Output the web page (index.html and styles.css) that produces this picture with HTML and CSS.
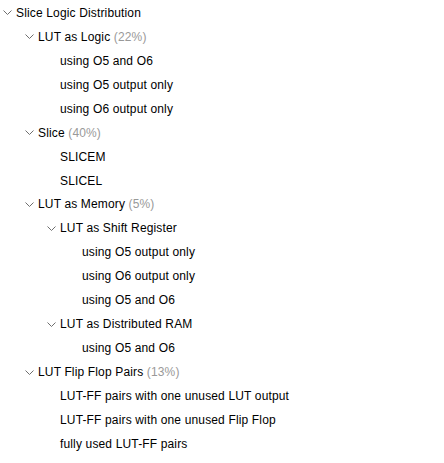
FILE: index.html
```html
<!DOCTYPE html>
<html>
<head>
<meta charset="utf-8">
<link rel="stylesheet" href="styles.css">
</head>
<body>
<ul class="tree">
  <li class="row l0"><span class="chev"><svg viewBox="0 0 9 5" width="9" height="5"><path d="M0.5 0.5 L4.5 4.5 L8.5 0.5" /></svg></span><span class="label">Slice Logic Distribution</span></li>
  <li class="row l1"><span class="chev"><svg viewBox="0 0 9 5" width="9" height="5"><path d="M0.5 0.5 L4.5 4.5 L8.5 0.5" /></svg></span><span class="label">LUT as Logic <span class="pct">(22%)</span></span></li>
  <li class="row l2"><span class="chev"></span><span class="label">using O5 and O6</span></li>
  <li class="row l2"><span class="chev"></span><span class="label">using O5 output only</span></li>
  <li class="row l2"><span class="chev"></span><span class="label">using O6 output only</span></li>
  <li class="row l1"><span class="chev"><svg viewBox="0 0 9 5" width="9" height="5"><path d="M0.5 0.5 L4.5 4.5 L8.5 0.5" /></svg></span><span class="label">Slice <span class="pct">(40%)</span></span></li>
  <li class="row l2"><span class="chev"></span><span class="label">SLICEM</span></li>
  <li class="row l2"><span class="chev"></span><span class="label">SLICEL</span></li>
  <li class="row l1"><span class="chev"><svg viewBox="0 0 9 5" width="9" height="5"><path d="M0.5 0.5 L4.5 4.5 L8.5 0.5" /></svg></span><span class="label">LUT as Memory <span class="pct">(5%)</span></span></li>
  <li class="row l2"><span class="chev"><svg viewBox="0 0 9 5" width="9" height="5"><path d="M0.5 0.5 L4.5 4.5 L8.5 0.5" /></svg></span><span class="label">LUT as Shift Register</span></li>
  <li class="row l3"><span class="chev"></span><span class="label">using O5 output only</span></li>
  <li class="row l3"><span class="chev"></span><span class="label">using O6 output only</span></li>
  <li class="row l3"><span class="chev"></span><span class="label">using O5 and O6</span></li>
  <li class="row l2"><span class="chev"><svg viewBox="0 0 9 5" width="9" height="5"><path d="M0.5 0.5 L4.5 4.5 L8.5 0.5" /></svg></span><span class="label">LUT as Distributed RAM</span></li>
  <li class="row l3"><span class="chev"></span><span class="label">using O5 and O6</span></li>
  <li class="row l1"><span class="chev"><svg viewBox="0 0 9 5" width="9" height="5"><path d="M0.5 0.5 L4.5 4.5 L8.5 0.5" /></svg></span><span class="label">LUT Flip Flop Pairs <span class="pct">(13%)</span></span></li>
  <li class="row l2"><span class="chev"></span><span class="label">LUT-FF pairs with one unused LUT output</span></li>
  <li class="row l2"><span class="chev"></span><span class="label">LUT-FF pairs with one unused Flip Flop</span></li>
  <li class="row l2"><span class="chev"></span><span class="label">fully used LUT-FF pairs</span></li>
</ul>
</body>
</html>
```
FILE: styles.css
```css
html, body {
  margin: 0;
  padding: 0;
  background: #ffffff;
}
body {
  font-family: "Liberation Sans", Arial, sans-serif;
  font-size: 12px;
  letter-spacing: 0.15px;
  color: #000000;
}
.tree {
  list-style: none;
  margin: 0;
  padding: 1px 0 0 0;
}
.row {
  display: flex;
  align-items: center;
  height: 23.94px;
  white-space: nowrap;
}
.l0 { padding-left: 3px; }
.l1 { padding-left: 25px; }
.l2 { padding-left: 47px; }
.l3 { padding-left: 69px; }
.chev {
  display: flex;
  align-items: center;
  width: 13px;
  height: 24px;
}
.chev svg {
  display: block;
  fill: none;
  stroke: #6e6e6e;
  stroke-width: 1;
}
.label {
  line-height: 24px;
}
.pct {
  color: #999999;
}
```
